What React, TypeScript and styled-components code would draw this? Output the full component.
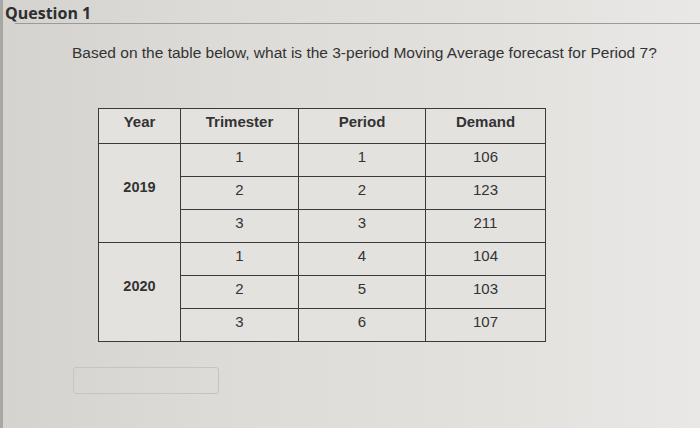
import React from 'react';
import styled, { createGlobalStyle } from 'styled-components';

const GlobalStyle = createGlobalStyle`
    html, body {
        margin: 0;
        padding: 0;
    }
    body {
        width: 700px;
        height: 428px;
        overflow: hidden;
    }
`;

const rows = [
    { year: '2019', trimester: '1', period: '1', demand: '106' },
    { year: '2019', trimester: '2', period: '2', demand: '123' },
    { year: '2019', trimester: '3', period: '3', demand: '211' },
    { year: '2020', trimester: '1', period: '4', demand: '104' },
    { year: '2020', trimester: '2', period: '5', demand: '103' },
    { year: '2020', trimester: '3', period: '6', demand: '107' },
];

const App = () => {
    return (
        <>
            <GlobalStyle />
            <Page>
                <QuestionHeader>
                    <QuestionTitle>Question 1</QuestionTitle>
                    <HeaderRule />
                </QuestionHeader>
                <Prompt>
                    Based on the table below, what is the 3-period Moving Average forecast for Period 7?
                </Prompt>
                <DataTable>
                    <thead>
                        <tr>
                            <HeadCell $width={82}>Year</HeadCell>
                            <HeadCell $width={118}>Trimester</HeadCell>
                            <HeadCell $width={127}>Period</HeadCell>
                            <HeadCell $width={120}>Demand</HeadCell>
                        </tr>
                    </thead>
                    <tbody>
                        {rows.map((row, i) => (
                            <tr key={i}>
                                {i % 3 === 0 && <YearCell rowSpan={3}>{row.year}</YearCell>}
                                <BodyCell>{row.trimester}</BodyCell>
                                <BodyCell>{row.period}</BodyCell>
                                <BodyCell>{row.demand}</BodyCell>
                            </tr>
                        ))}
                    </tbody>
                </DataTable>
                <AnswerBox type='text' />
            </Page>
        </>
    );
};

const Page = styled.div`
    width: 700px;
    height: 428px;
    box-sizing: border-box;
    background: linear-gradient(90deg, #d5d3cf 0%, #dddbd7 30%, #e2e1de 70%, #e9e8e6 100%);
    border-left: 3px solid #a9a7a3;
    display: flex;
    flex-direction: column;
    align-items: flex-start;
    font-family: 'Liberation Sans', Arial, sans-serif;
    color: #2b2b2b;
`;

const QuestionHeader = styled.div`
    width: 100%;
    display: flex;
    flex-direction: column;
    padding-top: 3px;
`;

const QuestionTitle = styled.div`
    font-family: 'Open Sans', sans-serif;
    font-weight: 700;
    font-size: 16px;
    line-height: 20px;
    color: #2e2e2e;
    margin-left: 2px;
`;

const HeaderRule = styled.div`
    margin-left: 12px;
    height: 1px;
    background: #9b9a97;
`;

const Prompt = styled.div`
    margin: 20px 0 0 69px;
    font-size: 15.5px;
    line-height: 18px;
    color: #333;
    white-space: nowrap;
`;

const DataTable = styled.table`
    margin: 46px 0 0 95px;
    border-collapse: collapse;
    background: #e3e2df;
    border: 1.5px solid #3a3a3a;
    font-size: 15px;
    color: #333;
`;

const HeadCell = styled.th<{ $width: number }>`
    width: ${(p) => p.$width}px;
    height: 35px;
    box-sizing: border-box;
    border: 1.5px solid #3a3a3a;
    font-weight: 700;
    text-align: center;
    padding: 0 0 10px;
`;

const YearCell = styled.td`
    border: 1.5px solid #3a3a3a;
    text-align: center;
    font-weight: 700;
    font-size: 14.5px;
    vertical-align: middle;
    padding: 0 0 12px;
`;

const BodyCell = styled.td`
    height: 33px;
    box-sizing: border-box;
    border: 1.5px solid #3a3a3a;
    text-align: center;
    vertical-align: top;
    padding: 4px 0 0;
`;

const AnswerBox = styled.input`
    margin: 25px 0 0 70px;
    width: 146px;
    height: 27px;
    box-sizing: border-box;
    border: 1px solid #c5c4c0;
    border-radius: 3px;
    background: transparent;
    outline: none;
`;

export default App;
